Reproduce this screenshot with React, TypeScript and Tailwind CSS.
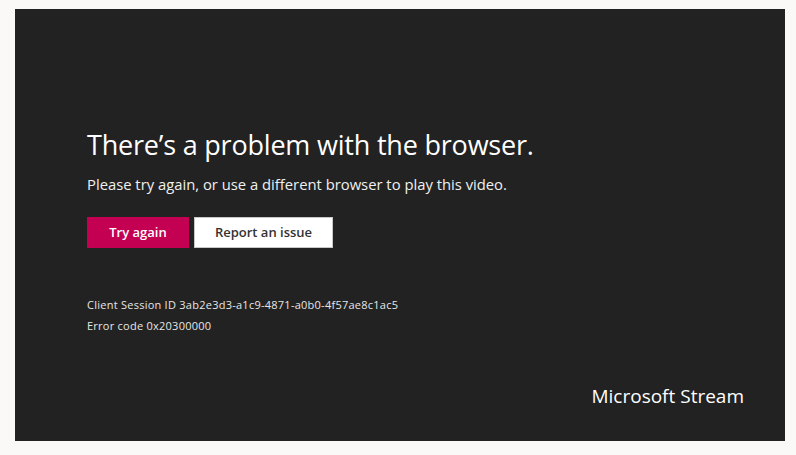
export default function App() {
  return (
    <div
      className="w-[796px] h-[455px] bg-[#faf9f7] pt-[9px] pl-[15px] overflow-hidden"
      style={{ fontFamily: '"Open Sans", "Noto Sans", sans-serif' }}
    >
      <div className="w-[770px] h-[432px] bg-[#222222] flex flex-col pl-[72px] pr-[41px] pt-[117px] pb-[32px] text-white">
        <h1 className="text-[27px] leading-[38px] tracking-[-0.2px]">There’s a problem with the browser.</h1>
        <p className="mt-[10px] text-[14.8px] leading-[20px] text-[#f0f0f0]">
          Please try again, or use a different browser to play this video.
        </p>
        <div className="mt-[23px] flex gap-[5px]">
          <button className="w-[102px] h-[31px] bg-[#c30052] text-[13px] font-semibold text-white">
            Try again
          </button>
          <button className="w-[139px] h-[31px] bg-white border border-[#c8c8c8] text-[13px] font-semibold text-[#333333]">
            Report an issue
          </button>
        </div>
        <div className="mt-[46px] text-[11px] leading-[21px] tracking-[0.25px] text-[#e6e6e6]">
          <p>Client Session ID 3ab2e3d3-a1c9-4871-a0b0-4f57ae8c1ac5</p>
          <p>Error code 0x20300000</p>
        </div>
        <div className="mt-auto self-end text-[19px] leading-[26px]">Microsoft Stream</div>
      </div>
    </div>
  );
}
